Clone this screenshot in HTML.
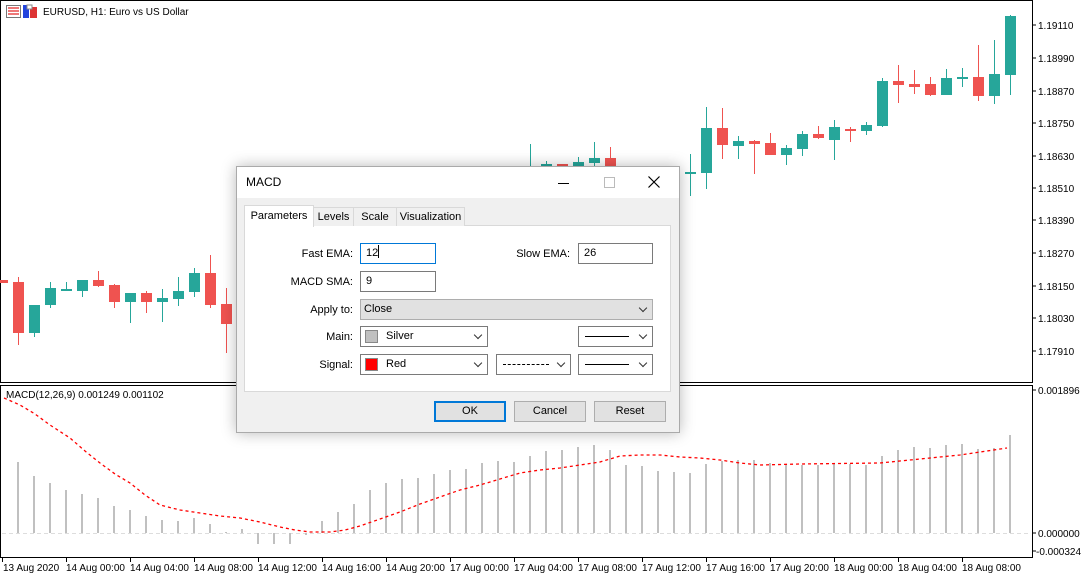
<!DOCTYPE html>
<html><head><meta charset="utf-8"><style>
body{margin:0;width:1083px;height:575px;overflow:hidden;background:#fff;position:relative;font-family:"Liberation Sans",sans-serif}
svg{position:absolute;left:0;top:0}
.dlg{position:absolute;left:236px;top:166px;width:442px;height:265px;background:#f0f0f0;border:1px solid #aaa;box-shadow:0 0 14px rgba(0,0,0,.28);font-size:11px;color:#000}
.tb{position:absolute;left:0;top:0;width:442px;height:31px;background:#fff}
.a{position:absolute}
.inp{position:absolute;background:#fff;border:1px solid #7a7a7a;box-sizing:border-box;height:21px;line-height:19px;padding-left:5px}
.cmb{position:absolute;background:#fff;border:1px solid #7a7a7a;box-sizing:border-box;height:21px;line-height:19px}
.chev{position:absolute;right:6px;top:5px;width:5px;height:5px;border-right:1px solid #333;border-bottom:1px solid #333;transform:rotate(45deg)}
.lbl{position:absolute;text-align:right;width:100px}
.btn{position:absolute;top:234px;width:72px;height:21px;background:#e1e1e1;border:1px solid #adadad;box-sizing:border-box;text-align:center;line-height:19px}
.tab{position:absolute;top:40px;height:19px;border:1px solid #d9d9d9;border-bottom:none;background:#f0f0f0;box-sizing:border-box;line-height:18px;text-align:center}
</style></head><body>
<svg width="1083" height="575" font-family="Liberation Sans,sans-serif" font-size="10">
<rect x="0.5" y="0.5" width="1032" height="382" fill="none" stroke="#000"/>
<rect x="0.5" y="385.5" width="1032" height="172" fill="none" stroke="#000"/>
<g fill="#000">
<text x="1038" y="29">1.19110</text><text x="1038" y="62">1.18990</text><text x="1038" y="95">1.18870</text><text x="1038" y="127">1.18750</text><text x="1038" y="160">1.18630</text><text x="1038" y="192">1.18510</text><text x="1038" y="224">1.18390</text><text x="1038" y="257">1.18270</text><text x="1038" y="290">1.18150</text><text x="1038" y="322">1.18030</text><text x="1038" y="355">1.17910</text>
<text x="1038" y="394">0.001896</text><text x="1038" y="537">0.000000</text><text x="1036" y="555">-0.000324</text>
<text x="6" y="398">MACD(12,26,9) 0.001249 0.001102</text>
<text x="43" y="15">EURUSD, H1:  Euro vs US Dollar</text>
</g>
<path stroke="#000" d="M1032 25h4M1032 58h4M1032 91h4M1032 123h4M1032 156h4M1032 188h4M1032 220h4M1032 253h4M1032 286h4M1032 318h4M1032 351h4M1032 390h4M1032 533h4M1032 551h4"/>
<g fill="#000">
<text x="3" y="571">13 Aug 2020</text><text x="66" y="571">14 Aug 00:00</text><text x="130" y="571">14 Aug 04:00</text><text x="194" y="571">14 Aug 08:00</text><text x="258" y="571">14 Aug 12:00</text><text x="322" y="571">14 Aug 16:00</text><text x="386" y="571">14 Aug 20:00</text><text x="450" y="571">17 Aug 00:00</text><text x="514" y="571">17 Aug 04:00</text><text x="578" y="571">17 Aug 08:00</text><text x="642" y="571">17 Aug 12:00</text><text x="706" y="571">17 Aug 16:00</text><text x="770" y="571">17 Aug 20:00</text><text x="834" y="571">18 Aug 00:00</text><text x="898" y="571">18 Aug 04:00</text><text x="962" y="571">18 Aug 08:00</text>
</g>
<path stroke="#000" d="M2.5 558v4M66.5 558v4M130.5 558v4M194.5 558v4M258.5 558v4M322.5 558v4M386.5 558v4M450.5 558v4M514.5 558v4M578.5 558v4M642.5 558v4M706.5 558v4M770.5 558v4M834.5 558v4M898.5 558v4M962.5 558v4"/>
<!-- icons -->
<rect x="6.5" y="5.5" width="14" height="12" fill="#fff" stroke="#777"/><path d="M8 8h11M8 11h11M8 14h11" stroke="#e77" stroke-width="2"/>
<rect x="23" y="5" width="6" height="13" fill="#2244dd"/><rect x="30" y="7" width="7" height="11" fill="#dd3333"/><rect x="27" y="5" width="5" height="4" fill="#fff" stroke="#888"/>
<!-- histogram -->
<path stroke="#ddd" stroke-dasharray="4 3" d="M2 533.5H1030"/>
<path stroke="#c0c0c0" stroke-width="2" d="M18 533V462M34 533V476M50 533V483M66 533V490M82 533V494M98 533V498M114 533V506M130 533V510M146 533V516M162 533V520M178 533V521M194 533V518M210 533V524M226 533V532M242 533V529M258 533V544M274 533V544M290 533V544M306 533V535M322 533V521M338 533V512M354 533V504M370 533V490M386 533V483M402 533V479M418 533V478M434 533V474M450 533V470M466 533V469M482 533V463M498 533V461M514 533V462M530 533V456M546 533V451M562 533V450M578 533V447M594 533V445M610 533V450M626 533V465M642 533V466M658 533V471M674 533V472M690 533V473M706 533V464M722 533V461M738 533V460M754 533V460M770 533V463M786 533V465M802 533V465M818 533V465M834 533V464M850 533V464M866 533V465M882 533V456M898 533V450M914 533V447M930 533V448M946 533V445M962 533V444M978 533V449M994 533V448M1010 533V435"/>
<path fill="none" stroke="#f00" stroke-width="1.3" stroke-dasharray="3 3" d="M4 398L20 405L35 414L50 425L70 438L85 451L100 463L115 474L130 483L145 495L160 505L180 510L200 513L220 516L240 518L260 522L280 527L295 530L310 532L330 532L345 530L360 526L380 519L400 512L420 504L440 497L460 490L480 485L500 479L520 473L540 470L560 468L580 465L600 462L620 456L640 455L660 455L680 457L700 458L720 460L740 463L760 465L800 464L880 463L920 459L960 455L1007 448"/>
<!-- candles -->
<g fill="#ef5350"><rect x="-3" y="280" width="11" height="3"/><rect x="13" y="282" width="11" height="51"/><rect x="93" y="280" width="11" height="6"/><rect x="109" y="285" width="11" height="17"/><rect x="141" y="293" width="11" height="9"/><rect x="205" y="273" width="11" height="32"/><rect x="221" y="304" width="11" height="20"/><rect x="557" y="164" width="11" height="6"/><rect x="605" y="158" width="11" height="12"/><rect x="717" y="128" width="11" height="17"/><rect x="749" y="141" width="11" height="3"/><rect x="765" y="143" width="11" height="12"/><rect x="813" y="134" width="11" height="4"/><rect x="845" y="129" width="11" height="2"/><rect x="893" y="81" width="11" height="4"/><rect x="909" y="84" width="11" height="3"/><rect x="925" y="84" width="11" height="11"/><rect x="973" y="77" width="11" height="19"/></g>
<path stroke="#ef5350" d="M18.5 277V345M98.5 271V287M114.5 284V308M146.5 291V313M210.5 255V308M226.5 288V353M610.5 147V170M722.5 108V159M754.5 140V174M770.5 133V155M818.5 126V139M850.5 127V142M898.5 65V103M914.5 70V94M930.5 77V96M978.5 45V101"/>
<g fill="#26a69a"><rect x="29" y="305" width="11" height="28"/><rect x="45" y="288" width="11" height="17"/><rect x="61" y="289" width="11" height="2"/><rect x="77" y="280" width="11" height="11"/><rect x="125" y="293" width="11" height="9"/><rect x="157" y="298" width="11" height="4"/><rect x="173" y="291" width="11" height="8"/><rect x="189" y="273" width="11" height="19"/><rect x="541" y="164" width="11" height="6"/><rect x="573" y="162" width="11" height="8"/><rect x="589" y="158" width="11" height="5"/><rect x="669" y="174" width="11" height="16"/><rect x="685" y="172" width="11" height="2"/><rect x="701" y="128" width="11" height="45"/><rect x="733" y="141" width="11" height="5"/><rect x="781" y="148" width="11" height="7"/><rect x="797" y="134" width="11" height="15"/><rect x="829" y="127" width="11" height="13"/><rect x="861" y="125" width="11" height="6"/><rect x="877" y="81" width="11" height="45"/><rect x="941" y="78" width="11" height="17"/><rect x="957" y="77" width="11" height="2"/><rect x="989" y="74" width="11" height="22"/><rect x="1005" y="16" width="11" height="59"/></g>
<path stroke="#26a69a" d="M34.5 305V337M50.5 282V308M66.5 282V291M82.5 280V297M130.5 293V323M162.5 289V322M178.5 277V306M194.5 268V297M530.5 144V175M546.5 161V170M578.5 157V170M594.5 142V170M690.5 154V196M706.5 107V189M738.5 136V159M786.5 145V165M802.5 131V156M834.5 120V160M866.5 122V135M882.5 78V127M946.5 69V95M962.5 68V87M994.5 40V104M1010.5 15V95"/>
</svg>
<div class="dlg">
 <div class="tb"><span class="a" style="left:9px;top:8px;font-size:12px">MACD</span>
  <div class="a" style="left:321px;top:16px;width:11px;height:1px;background:#000"></div>
  <div class="a" style="left:367px;top:10px;width:9px;height:9px;border:1px solid #bbb"></div>
  <svg style="position:absolute;left:411px;top:9px" width="12" height="12"><path d="M0.5 0.5L11.5 11.5M11.5 0.5L0.5 11.5" stroke="#000" stroke-width="1.2"/></svg>
 </div>
 <div class="a" style="left:7px;top:58px;width:427px;height:167px;background:#fff;border:1px solid #d9d9d9;box-sizing:border-box"></div>
 <div class="tab" style="left:76px;width:41px">Levels</div>
 <div class="tab" style="left:116px;width:44px">Scale</div>
 <div class="tab" style="left:159px;width:69px">Visualization</div>
 <div class="tab" style="left:7px;top:38px;width:70px;height:22px;background:#fff;border-bottom:none;line-height:20px">Parameters</div>
 <div class="lbl" style="left:16px;top:81px">Fast EMA:</div>
 <div class="inp" style="left:123px;top:76px;width:76px;border-color:#0078d7">12<span style="display:inline-block;width:1px;height:13px;background:#000;vertical-align:-2px"></span></div>
 <div class="lbl" style="left:233px;top:81px">Slow EMA:</div>
 <div class="inp" style="left:341px;top:76px;width:75px">26</div>
 <div class="lbl" style="left:16px;top:109px">MACD SMA:</div>
 <div class="inp" style="left:123px;top:104px;width:76px">9</div>
 <div class="lbl" style="left:16px;top:137px">Apply to:</div>
 <div class="cmb" style="left:123px;top:132px;width:293px;background:#e1e1e1;border-color:#adadad;padding-left:3px">Close<div class="chev"></div></div>
 <div class="lbl" style="left:16px;top:164px">Main:</div>
 <div class="cmb" style="left:123px;top:159px;width:128px"><span class="a" style="left:4px;top:3px;width:11px;height:11px;background:#c0c0c0;border:1px solid #888"></span><span class="a" style="left:25px">Silver</span><div class="chev"></div></div>
 <div class="cmb" style="left:341px;top:159px;width:75px"><span class="a" style="left:6px;top:9px;width:44px;height:1px;background:#000"></span><div class="chev"></div></div>
 <div class="lbl" style="left:16px;top:192px">Signal:</div>
 <div class="cmb" style="left:123px;top:187px;width:128px"><span class="a" style="left:4px;top:3px;width:11px;height:11px;background:#f00;border:1px solid #888"></span><span class="a" style="left:25px">Red</span><div class="chev"></div></div>
 <div class="cmb" style="left:259px;top:187px;width:75px"><span class="a" style="left:6px;top:9px;width:46px;border-top:1px dashed #000"></span><div class="chev"></div></div>
 <div class="cmb" style="left:341px;top:187px;width:75px"><span class="a" style="left:6px;top:9px;width:44px;height:1px;background:#000"></span><div class="chev"></div></div>
 <div class="btn" style="left:197px;border:2px solid #0078d7;line-height:17px">OK</div>
 <div class="btn" style="left:277px">Cancel</div>
 <div class="btn" style="left:357px">Reset</div>
</div>
</body></html>
